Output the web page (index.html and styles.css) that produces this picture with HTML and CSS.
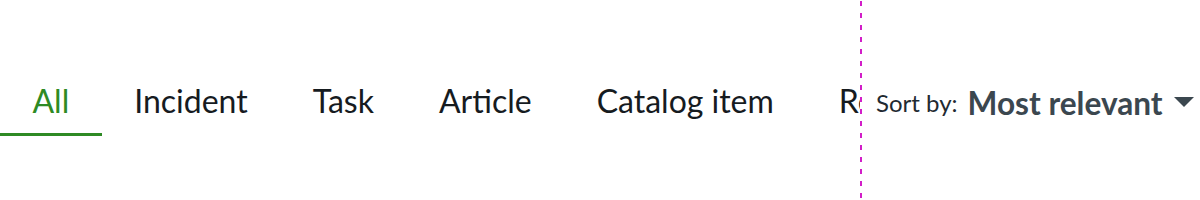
FILE: index.html
```html
<!DOCTYPE html>
<html lang="en">
<head>
  <meta charset="UTF-8" />
  <title>Search results</title>
  <link rel="stylesheet" href="styles.css">
</head>
<body>

  <div class="toolbar">
    <!-- Záložky typů výsledků -->
    <nav class="tabs">
      <a class="tab active">All</a>
      <a class="tab">Incident</a>
      <a class="tab">Task</a>
      <a class="tab">Article</a>
      <a class="tab">Catalog item</a>
      <a class="tab">Re</a>
    </nav>

    <!-- Řazení -->
    <div class="sort">
      <span class="sort-label">Sort by:</span>
      <span class="sort-value">Most relevant</span>
      <span class="caret"></span>
    </div>
  </div>

</body>
</html>
```

FILE: styles.css
```css
* {
  margin: 0;
  padding: 0;
  box-sizing: border-box;
}
body, html {
  height: 100%;
  overflow: hidden;
  font-family: Lato, 'Open Sans', sans-serif;
  background: #fff;
}

.toolbar {
  display: flex;
  height: 200px;
  align-items: center;
}

.tabs {
  display: flex;
  width: 860px;
  flex-shrink: 0;
  overflow: hidden;
}
.tab {
  flex-shrink: 0;
  padding: 16px 32.5px 12px;
  font-size: 32px;
  line-height: 40px;
  color: #161b1f;
  border-bottom: 3px solid transparent;
  cursor: pointer;
}
.tab.active {
  color: #2e8a24;
  border-bottom-color: #2e8a24;
}

.sort {
  align-self: stretch;
  display: flex;
  align-items: center;
  padding: 5px 0 0 16px;
  background: linear-gradient(#d21ec8 5px, transparent 0) 0 1px / 2px 12px repeat-y;
  white-space: nowrap;
  cursor: pointer;
}
.sort-label {
  font-size: 24px;
  line-height: 32px;
  color: #1f2a31;
  margin-right: 10px;
}
.sort-value {
  font-size: 31.6px;
  line-height: 40px;
  font-weight: bold;
  color: #3b474f;
}
.caret {
  width: 0;
  height: 0;
  margin: 0 0 2px 11px;
  border-left: 10px solid transparent;
  border-right: 10px solid transparent;
  border-top: 10px solid #3b474f;
}
```
